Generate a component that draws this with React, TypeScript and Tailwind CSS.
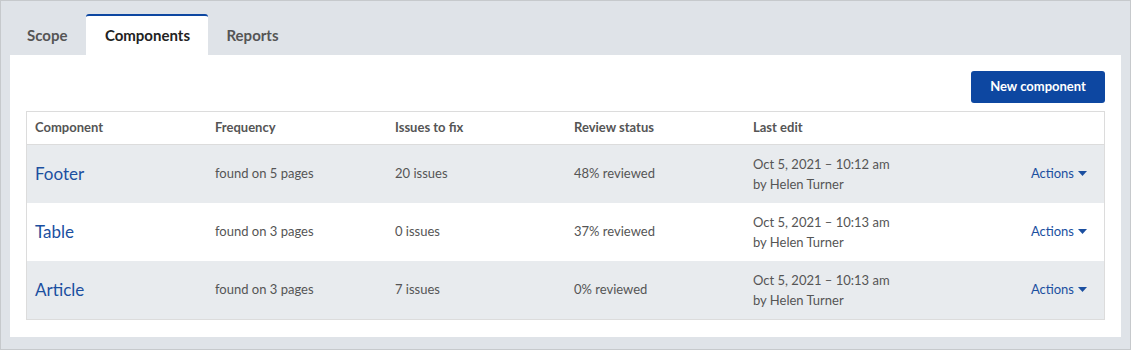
const rows = [
  { name: 'Footer', freq: 'found on 5 pages', issues: '20 issues', review: '48% reviewed', edit: 'Oct 5, 2021 – 10:12 am' },
  { name: 'Table', freq: 'found on 3 pages', issues: '0 issues', review: '37% reviewed', edit: 'Oct 5, 2021 – 10:13 am' },
  { name: 'Article', freq: 'found on 3 pages', issues: '7 issues', review: '0% reviewed', edit: 'Oct 5, 2021 – 10:13 am' },
];

function Tabs() {
  return (
    <div className="flex items-end h-[54px] pl-[9px]">
      <div className="h-[41px] flex items-center pt-[2px] pl-[17px] pr-[19px] text-[15px] font-bold text-[#555]">Scope</div>
      <div className="w-[122px] h-[41px] bg-white border-t-2 border-[#0d47a1] rounded-t-[3px] flex items-center justify-center text-[15px] font-bold text-[#222]">
        Components
      </div>
      <div className="h-[41px] flex items-center pt-[2px] px-[18px] text-[15px] font-bold text-[#555]">Reports</div>
    </div>
  );
}

function Caret() {
  return (
    <svg width="9" height="5" viewBox="0 0 9 5" className="ml-[4px] mb-[2px]">
      <path d="M0 0h9L4.5 5z" fill="currentColor" />
    </svg>
  );
}

export default function App() {
  return (
    <div className="w-[1131px] h-[350px] bg-[#dfe3e8] border border-[#c6c9cc] font-['Lato',sans-serif]">
      <Tabs />
      <div className="mx-[9px] h-[282px] bg-white px-[16px] pt-[16px]">
        <div className="flex justify-end">
          <button className="w-[134px] h-[32px] bg-[#0d47a1] rounded-[3px] text-white text-[13px] font-bold">
            New component
          </button>
        </div>
        <div className="mt-[8px] border border-[#dcdcdc]">
          <div className="grid grid-cols-[180px_180px_179px_179px_1fr] h-[33px] items-center pl-[8px] text-[13px] font-bold text-[#555] border-b border-[#dcdcdc]">
            <div>Component</div>
            <div>Frequency</div>
            <div>Issues to fix</div>
            <div>Review status</div>
            <div>Last edit</div>
          </div>
          {rows.map((r, i) => (
            <div
              key={r.name}
              className={`grid grid-cols-[180px_180px_179px_179px_1fr_auto] h-[58px] items-center pl-[8px] pr-[17px] text-[13px] text-[#555] ${i % 2 === 0 ? 'bg-[#e8ebee]' : 'bg-white'}`}
            >
              <div className="text-[17px] text-[#1b4fa0]">{r.name}</div>
              <div>{r.freq}</div>
              <div>{r.issues}</div>
              <div>{r.review}</div>
              <div className="leading-[20px]">
                <div>{r.edit}</div>
                <div>by Helen Turner</div>
              </div>
              <div className="flex items-center text-[#1b4fa0]">
                Actions
                <Caret />
              </div>
            </div>
          ))}
        </div>
      </div>
    </div>
  );
}
